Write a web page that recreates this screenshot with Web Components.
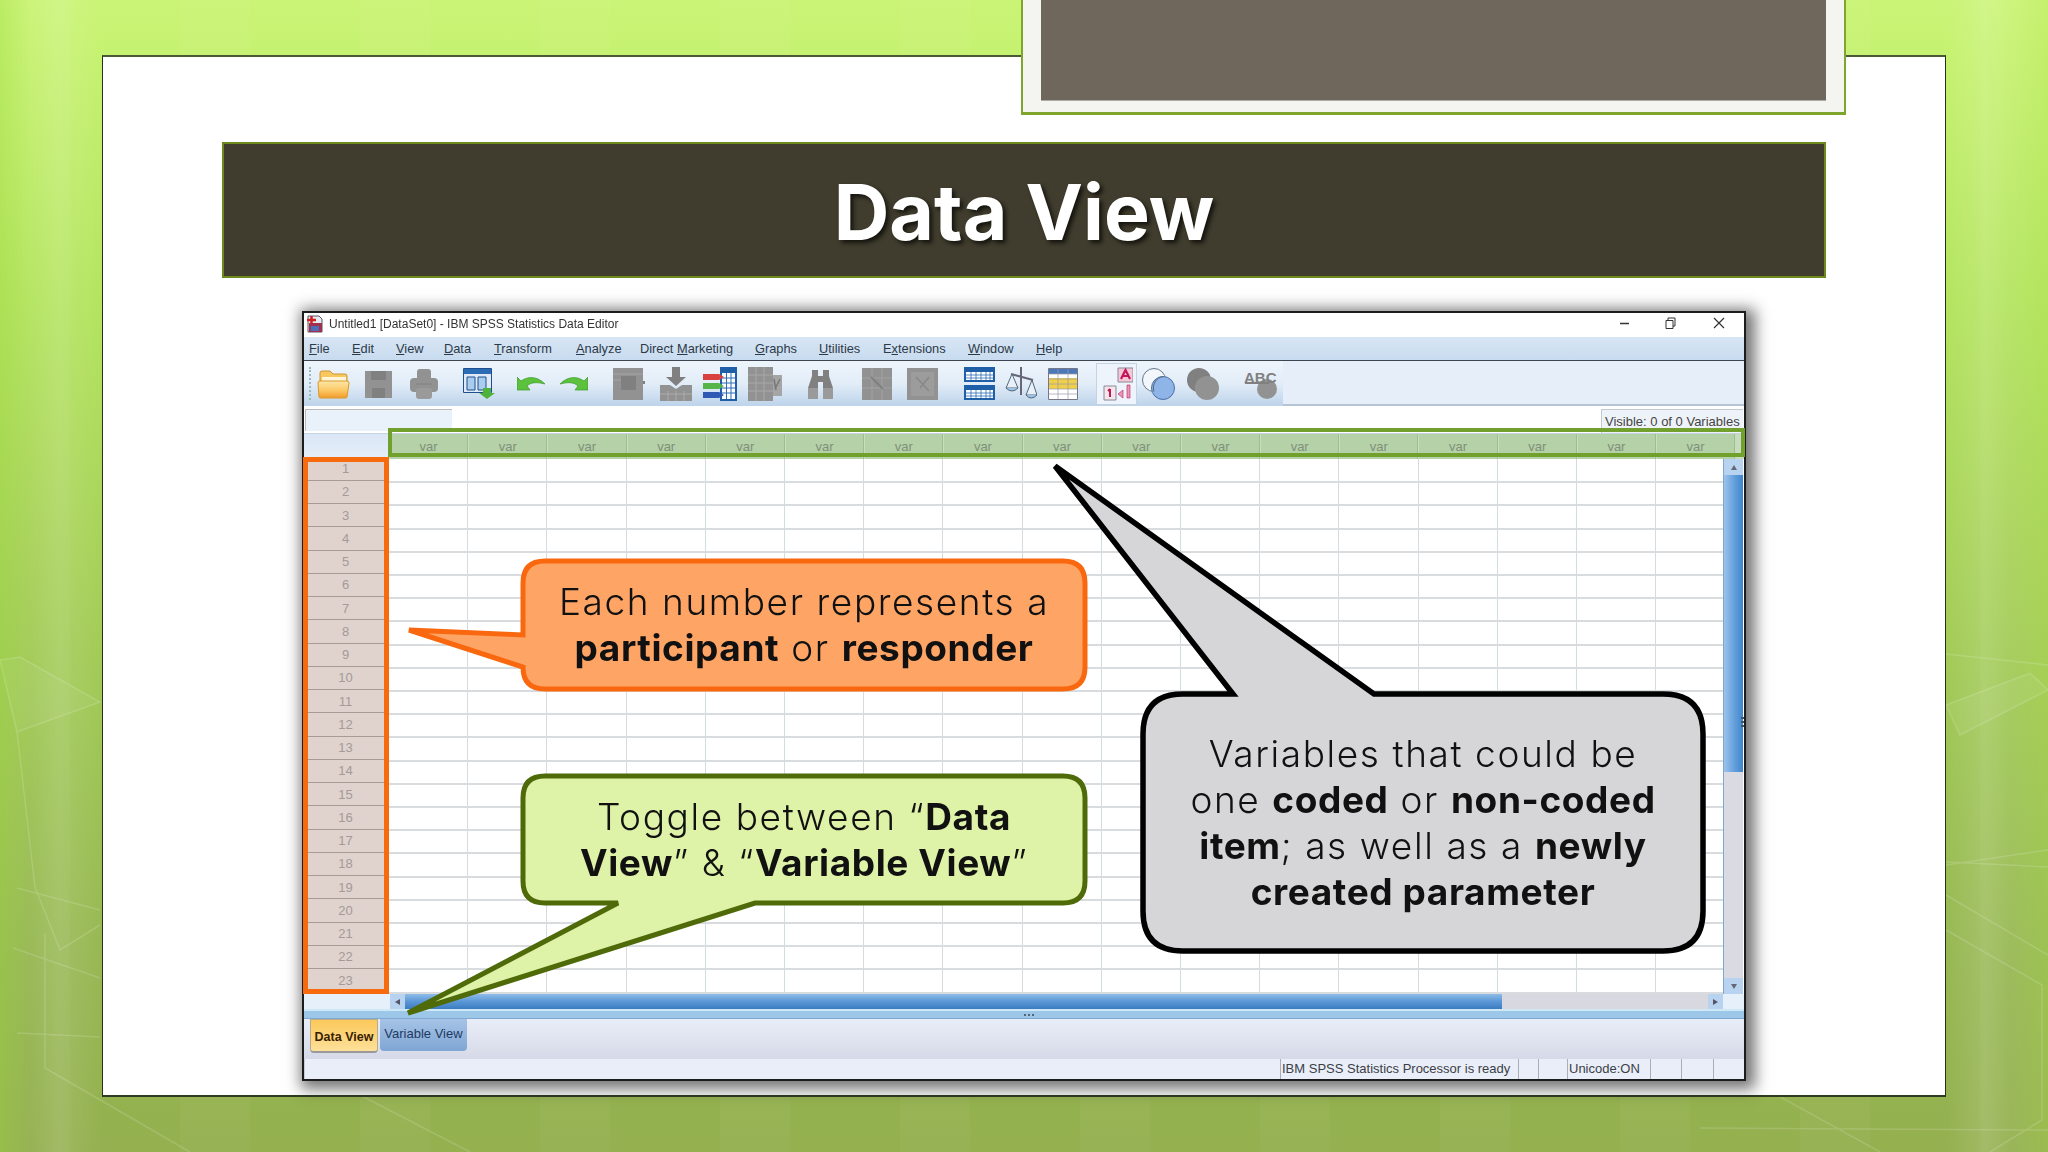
<!DOCTYPE html>
<html>
<head>
<meta charset="utf-8">
<title>Data View</title>
<style>
html,body{margin:0;padding:0;background:#a5cb5c}
</style>
</head>
<body>
<slide-stage>
  <photo-frame slot="over"></photo-frame>
  <title-bar>Data View</title-bar>
  <spss-window></spss-window>
  <call-out slot="over" kind="orange" style="left:523px;top:561px;width:562px;height:128px">Each number represents a<br><b>participant</b> or <b>responder</b></call-out>
  <call-out slot="over" kind="green" style="left:523px;top:776px;width:562px;height:127px">Toggle between “<b>Data</b><br><b>View</b>” &amp; “<b>Variable View</b>”</call-out>
  <call-out slot="over" kind="gray" style="left:1143px;top:694px;width:560px;height:257px">Variables that could be<br>one <b>coded</b> or <b>non-coded</b><br><b>item</b>; as well as a <b>newly</b><br><b>created parameter</b></call-out>
</slide-stage>

<script>
// the slide: green background, white panel, anything floating goes in slot "over"
const stageTpl = document.createElement('template');
stageTpl.innerHTML = `
<style>
:host{display:block;position:relative;width:2048px;height:1152px;overflow:hidden;
  background:
    linear-gradient(90deg,rgba(150,215,50,.3) 0,rgba(150,215,50,0) 30px,rgba(255,255,255,.1) 60px,rgba(255,255,255,0) 102px,rgba(255,255,255,0) 1946px,rgba(255,255,255,.12) 1985px,rgba(255,255,255,.03) 2010px,rgba(170,225,60,.2) 2048px),
    repeating-linear-gradient(90deg,rgba(255,255,255,.03) 0,rgba(255,255,255,.03) 70px,rgba(255,255,255,0) 70px,rgba(255,255,255,0) 180px),
    linear-gradient(180deg,#caf476 0,#c6f271 50px,#b4e45f 300px,#a2cb57 650px,#97b853 950px,#94b04f 1152px);}
svg{position:absolute;left:0;top:0}
.panel{position:absolute;left:102px;top:55px;width:1842px;height:1038px;box-sizing:content-box;background:#fff;
  border:1px solid #26301c;border-top:2px solid #4a5a34;border-bottom:2px solid #2e3a22;display:flex;flex-direction:column;padding:0}
.inner{display:flex;flex-direction:column;padding-top:85px}
</style>
<svg width="2048" height="1152" fill="none" stroke="#fff" stroke-opacity=".15" stroke-width="1.5">
  <path d="M0 660L20 657L100 702L17 732Z" fill="#fff" fill-opacity=".05"/>
  <path d="M17 732L35 887L60 950L100 925M17 888L100 910M13 948L100 978M45 933V1068L190 1152M17 1033L100 1037"/>
  <path d="M1946 654L2048 665M1946 865L2048 850M1946 862L2048 867M1946 895L2048 955M1946 930L2042 985V1120L1990 1152M1777 1095L1880 1152M1700 1128L2048 1130M360 1095L470 1152"/>
  <path d="M1946 705L2030 673L2048 690L1960 735Z" fill="#fff" fill-opacity=".06"/>
</svg>
<div class="panel"><div class="inner"><slot></slot></div></div>
<slot name="over"></slot>`;
class SlideStage extends HTMLElement {
  constructor() {
    super();
    this.attachShadow({ mode: 'open' }).appendChild(stageTpl.content.cloneNode(true));
  }
}
customElements.define('slide-stage', SlideStage);

class PhotoFrame extends HTMLElement {
  constructor() {
    super();
    this.attachShadow({ mode: 'open' }).innerHTML = `
<style>
:host{display:block;position:absolute;left:1021px;top:-4px;width:825px;height:119px;box-sizing:border-box;
  background:#f4f5f1;border:2px solid #7fa52f;border-bottom-width:3px;padding:0 18px 12px}
div{height:100%;background:#6f675b;border-bottom:1px solid #aaa}
</style><div></div>`;
  }
}
customElements.define('photo-frame', PhotoFrame);

class TitleBar extends HTMLElement {
  constructor() {
    super();
    this.attachShadow({ mode: 'open' }).innerHTML = `
<style>
:host{display:flex;align-items:center;justify-content:center;box-sizing:border-box;
  width:1604px;height:136px;margin-left:119px;padding-top:4px;background:#403d2e;border:2px solid #6c8a1c;
  color:#fff;font:700 77px/1 Inter,"Liberation Sans",sans-serif;text-shadow:3px 3px 4px #15140e}
</style><slot></slot>`;
  }
}
customElements.define('title-bar', TitleBar);

// speech bubbles, the tail is part of the svg path and sticks out of the box
const bubbles = {
  orange: { fill: '#fea465', stroke: '#f9680f', sw: 5,
    d: 'M22 0H540Q562 0 562 22V106Q562 128 540 128H22Q0 128 0 106L-114 69L0 74V22Q0 0 22 0Z' },
  green: { fill: '#dff3a8', stroke: '#4f6a08', sw: 5,
    d: 'M22 0H540Q562 0 562 22V105Q562 127 540 127H232L-115 237L95 127H22Q0 127 0 105V22Q0 0 22 0Z' },
  gray: { fill: '#d6d6d8', stroke: '#000', sw: 5.5,
    d: 'M40 0H90L-88 -228L231 0H520Q560 0 560 40V217Q560 257 520 257H40Q0 257 0 217V40Q0 0 40 0Z' }
};

class CallOut extends HTMLElement {
  connectedCallback() {
    if (this.shadowRoot) return;
    const b = bubbles[this.getAttribute('kind')];
    const w = parseFloat(this.style.width), h = parseFloat(this.style.height);
    this.attachShadow({ mode: 'open' }).innerHTML = `
<style>
:host{display:flex;position:absolute;align-items:center;justify-content:center;text-align:center;
  color:#111;font:300 37px/46px Inter,"Liberation Sans",sans-serif;letter-spacing:1.6px}
svg{position:absolute;left:0;top:0;overflow:visible}
span{position:relative}
::slotted(b){font-weight:700;letter-spacing:.6px}
</style>
<svg width="${w}" height="${h}"><path d="${b.d}" fill="${b.fill}" stroke="${b.stroke}" stroke-width="${b.sw}" stroke-linejoin="miter" stroke-miterlimit="3"/></svg>
<span><slot></slot></span>`;
  }
}
customElements.define('call-out', CallOut);

// toolbar icons, gray ones are the disabled buttons
const GR = '#929292', GD = '#808080';
const icons = [
  [317, 33, 30, `<defs><linearGradient id="fo" x1="0" y1="0" x2="0" y2="1"><stop offset="0" stop-color="#fde6a8"/><stop offset=".55" stop-color="#fbc964"/><stop offset="1" stop-color="#f39a2a"/></linearGradient></defs><path d="M3 4q0-2 2-2h8l3 3h12q2 0 2 2v19H3z" fill="#f8c860" stroke="#cf9430"/><path d="M5 8h24v6H5z" fill="#fff6dc"/><path d="M1 14q0-2 2-2h27q2 0 2 2l-2 14q0 1-2 1H4q-2 0-2-1z" fill="url(#fo)" stroke="#d99a2a"/>`],
  [365, 27, 28, `<path d="M0 1h27v27H0z" fill="${GR}"/><path d="M6 1h15v9H6zM7 18h13v10H7z" fill="${GD}"/>`],
  [410, 28, 32, `<rect x="7" y="1" width="14" height="12" rx="3" fill="${GR}"/><rect x="0" y="10" width="28" height="14" rx="4" fill="${GR}"/><rect x="6" y="20" width="16" height="11" rx="3" fill="#9a9a9a"/><path d="M6 16h16" stroke="${GD}"/>`],
  [463, 32, 31, `<path d="M.5 .5h28v24H.5z" fill="#dfeaf6" stroke="#1f4f8f"/><path d="M1 1h27v5H1z" fill="#2b6cb5"/><path d="M4 9h8v13H4zM15 9h8v13h-8z" fill="#a9cdee" stroke="#1f4f8f"/><path d="M20 20h8v5h4l-8 6-8-6h4z" fill="#4eb33a"/>`],
  [517, 28, 15, `<path d="M0 14V1l4 4C11 0 20 0 28 8 20 6 14 6 10 10l3 4z" fill="#5cc23e" stroke="#3a9a2a" stroke-width=".7"/>`],
  [560, 28, 15, `<path d="M28 14V1l-4 4C17 0 8 0 0 8c8-2 14-2 18 2l-3 4z" fill="#5cc23e" stroke="#3a9a2a" stroke-width=".7"/>`],
  [613, 32, 32, `<path d="M0 0h30v32H0z" fill="${GR}"/><path d="M8 8h15v14H8zM30 13h2v3h-2z" fill="${GD}"/><path d="M0 6h30M0 12h8" stroke="#a5a5a5"/>`],
  [660, 32, 34, `<path d="M12 0h8v10h6l-10 9L6 10h6z" fill="${GD}"/><path d="M0 18h10l6 4 6-4h10v16H0z" fill="${GR}"/><path d="M0 27h32M8 24v10M16 24v10M24 24v10" stroke="#aaa"/>`],
  [703, 34, 34, `<path d="M17 0h17v34H17z" fill="#1f5fa8"/><path d="M19 6h13v26H19z" fill="#fff"/><path d="M19 11h13M19 16h13M19 21h13M19 26h13M23.500 6v26M28 6v26" stroke="#2b6cb5"/><path d="M0 7h16l5 3-5 3H0z" fill="#d94040"/><path d="M0 16h16l5 3-5 3H0z" fill="#56b548"/><path d="M0 25h16l5 3-5 3H0z" fill="#3058b5"/>`],
  [748, 34, 34, `<path d="M0 0h25v34H0z" fill="${GR}"/><path d="M25 8h9v21h-9z" fill="#a5a5a5"/><path d="M0 8h25M0 16h25M0 24h25M8 0v34M16 0v34" stroke="#a8a8a8"/><path d="M26 12l2 11M32 12l-5 10" stroke="#777" stroke-width="1.5"/>`],
  [808, 25, 31, `<path d="M4 2h6v6h5V2h6v6l4 12v11H15V14h-5v17H0V20L4 8z" fill="${GD}"/><path d="M0 20h10v11H0zM15 20h10v11H15z" fill="#9a9a9a"/>`],
  [862, 30, 32, `<path d="M0 0h30v32H0z" fill="${GR}"/><path d="M0 10h30M0 20h30M10 0v32M20 0v32" stroke="#a2a2a2"/><path d="M9 9l12 12" stroke="${GD}" stroke-width="2"/>`],
  [907, 31, 32, `<path d="M0 0h31v32H0z" fill="${GR}"/><path d="M4 4h23v24H4z" fill="#9c9c9c"/><path d="M9 9l13 14M22 9L13 20" stroke="#888" stroke-width="1.500"/>`],
  [964, 31, 33, `<path d="M0 0h31v15H0z" fill="#1f5fa8"/><path d="M2 5h27v8H2z" fill="#fff"/><path d="M2 8h27M2 11h27M7 5v8M12 5v8M17 5v8M22 5v8M26 5v8" stroke="#2b6cb5" stroke-width=".8"/><path d="M0 18h31v15H0z" fill="#1f5fa8"/><path d="M2 23h27v8H2z" fill="#fff"/><path d="M2 26h27M2 29h27M7 23v8M12 23v8M17 23v8M22 23v8M26 23v8" stroke="#2b6cb5" stroke-width=".8"/>`],
  [1005, 32, 33, `<path d="M16 0v7M6 7L28 13M16 28V7" stroke="#667" stroke-width="2"/><path d="M7 7L1 21h12zM27 13l-6 15h11z" fill="#e8f1fa" stroke="#567"/><path d="M1 21q6 6 12 0M21 28q5 6 11 0" fill="#9cc4ea" stroke="#567"/>`],
  [1048, 30, 32, `<path d="M.5 .5h29v31H.5z" fill="#fff" stroke="#778"/><path d="M1 1h28v5H1z" fill="#4a78b8"/><path d="M1 10h28v11H1z" fill="#f0cf4a"/><path d="M1 6h28M1 11h28M1 16h28M1 21h28M1 26h28M10 1v30M20 1v30" stroke="#99a" stroke-width=".7"/>`],
];
const selected = `<path d="M17 2h15v14H17z" fill="#f6c8d6" stroke="#889"/><path d="M20 13l4.500-9 4.500 9M22 10h5" fill="none" stroke="#c2185b" stroke-width="2.200"/>
  <path d="M3 20h12v14H3z" fill="#f6e6ea" stroke="#889"/><path d="M9 23v8M7 25l2-2" stroke="#c2185b" stroke-width="2" fill="none"/><path d="M17 28l5-4v8zM26 19v13h3V19z" fill="#e79ab5" stroke="#c2185b" stroke-width=".6"/>`;
const iconsB = [
  [1142, 33, 32, `<circle cx="12" cy="12" r="11.500" fill="#f3f7fc" stroke="#678"/><circle cx="21" cy="20" r="11.500" fill="#8fb4e8" stroke="#4a6fa8"/><path d="M12 23.500a11.500 11.500 0 0 1 9-15" fill="none" stroke="#567"/>`],
  [1187, 32, 32, `<circle cx="12" cy="12" r="12" fill="${GD}"/><circle cx="20" cy="20" r="12" fill="${GR}"/>`],
  [1245, 32, 32, `<circle cx="22" cy="21" r="10" fill="${GR}"/><path d="M0 15h24" stroke="${GD}" stroke-width="2"/>`],
];

class SpssToolbar extends HTMLElement {
  constructor() {
    super();
    let x = 317, html = '';
    for (const [left, w, h, body] of icons) {
      html += `<svg style="margin-left:${left - x}px" width="${w}" height="${h}" viewBox="0 0 ${w} ${h}">${body}</svg>`;
      x = left + w;
    }
    html += `<span class="sel"><svg width="32" height="36" viewBox="0 0 32 36">${selected}</svg></span>`;
    x = 1137;
    for (const [left, w, h, body] of iconsB) {
      html += `<svg style="margin-left:${left - x}px" width="${w}" height="${h}" viewBox="0 0 ${w} ${h}">${body}</svg>`;
      x = left + w;
    }
    this.attachShadow({ mode: 'open' }).innerHTML = `
<style>
:host{display:flex;height:45px;background:#e6eff9;box-shadow:inset 0 -2px 0 #b5c3d2}
.bar{display:flex;align-items:center;width:979px;padding-left:13px;box-sizing:border-box;
  background:linear-gradient(180deg,#eef5fc,#e2edf8 50%,#bdd3ea);position:relative}
.bar:before{content:"";position:absolute;left:5px;top:6px;bottom:6px;border-left:2px dotted #9bb}
svg{flex:none}
.abc{position:absolute;left:940px;top:8px;font:700 15px "Liberation Sans",sans-serif;color:${GD}}
.sel{display:flex;align-items:center;justify-content:center;box-sizing:border-box;width:41px;height:42px;margin-left:${1096 - (1078)}px;background:#eef4fb;border:1px solid #c5d2e0;flex:none}
</style>
<div class="bar">${html}<span class="abc">ABC</span></div>`;
  }
}
customElements.define('spss-toolbar', SpssToolbar);

// first letter underlined like a windows menu
class SpssMenubar extends HTMLElement {
  constructor() {
    super();
    const items = [['F','ile',43],['E','dit',44],['V','iew',48],['D','ata',50],['T','ransform',82],['A','nalyze',64],['Direct |M','arketing',115],['G','raphs',64],['U','tilities',64],['E|x','tensions',85],['W','indow',68],['H','elp',40]];
    const html = items.map(([a, b, w]) => {
      const p = a.split('|');
      const lead = p.length > 1 ? p[0] + '<u>' + p[1] + '</u>' : '<u>' + a + '</u>';
      return `<span style="width:${w}px">${lead}${b}</span>`;
    }).join('');
    this.attachShadow({ mode: 'open' }).innerHTML = `
<style>
:host{display:flex;align-items:center;height:24px;box-sizing:border-box;padding-left:5px;
  background:linear-gradient(180deg,#d8e6f4,#c8dbef);border-bottom:1px solid #3d4650;
  font:12.8px "Liberation Sans",sans-serif;color:#2c3a48}
span{flex:none;white-space:pre}
</style>${html}`;
  }
}
customElements.define('spss-menubar', SpssMenubar);

class SpssGrid extends HTMLElement {
  constructor() {
    super();
    let heads = '', rows = '';
    for (let i = 0; i < 17; i++) heads += '<div class="h">var</div>';
    for (let i = 1; i <= 23; i++) rows += `<div class="r">${i}</div>`;
    this.attachShadow({ mode: 'open' }).innerHTML = `
<style>
:host{display:flex;flex-direction:column;flex:1;min-height:0;font:13px "Liberation Sans",sans-serif}
.top{display:flex;height:25px;flex:none;overflow:hidden}
.corner{width:85px;flex:none;background:linear-gradient(180deg,#dbe7f6,#e5eefa)}
.heads{display:flex;flex:1;overflow:hidden;background:#c6dcbc}
.h{flex:none;width:79.2px;box-sizing:border-box;display:flex;align-items:center;justify-content:center;
  background:#b5d1a8;color:#7f9079;border-right:1px solid #9dbf90;border-left:1px solid #c8dec0}
.body{display:flex;flex:1;min-height:0}
.rows{width:83px;flex:none;display:flex;flex-direction:column;margin-top:-1.500px;padding-right:2px;background:#e0d1cb}
.r{height:23.25px;box-sizing:border-box;flex:none;display:flex;align-items:center;justify-content:center;
  background:#e0d2cc;color:#a39b98;border-bottom:1px solid #a89a94;font-size:13px}
.cells{flex:1;background-color:#fff;
  background-image:repeating-linear-gradient(180deg,transparent 0,transparent 21.2px,#d8dcdf 21.2px,#d8dcdf 23.2px),
    repeating-linear-gradient(90deg,transparent 0,transparent 78.2px,#d3dce1 78.2px,#d3dce1 79.2px);
  background-position:0 1px,0 0}
.v{width:19px;flex:none;display:flex;flex-direction:column;background:#d9dae2;border-left:1px solid #7fa8cc;box-sizing:content-box;margin-right:1px}
.thumb{height:297px;flex:none;background:linear-gradient(90deg,#9cc3ec,#5f9cda 60%,#3f85cc)}
.arrow{height:16px;flex:none;background:#b8d3ef;display:flex;align-items:center;justify-content:center}
.track{flex:1}
.hs{display:flex;height:15px;flex:none}
.hs .pad{width:86px;flex:none;background:#e6f0fa}
.hs .arrow{width:15px;height:auto;flex:none}
.hbar{flex:1;display:flex;background:#d8d9e0}
.hthumb{width:1097px;background:linear-gradient(180deg,#8ebce8,#5b97d6 50%,#3a7cc0)}
.hs .end{width:21px;flex:none;background:#e6f0fa}
svg{display:block}
</style>
<div class="top"><div class="corner"></div><div class="heads">${heads}</div></div>
<div class="body">
  <div class="rows">${rows}</div>
  <div class="cells"></div>
  <div class="v">
    <div class="arrow"><svg width="8" height="7"><path d="M4 1l3 5H1z" fill="#667"/></svg></div>
    <div class="thumb"></div><div class="track"></div>
    <div class="arrow"><svg width="8" height="7"><path d="M4 6l3-5H1z" fill="#667"/></svg></div>
  </div>
</div>
<div class="hs">
  <div class="pad"></div>
  <div class="arrow"><svg width="7" height="8"><path d="M1 4l5-3v6z" fill="#556"/></svg></div>
  <div class="hbar"><div class="hthumb"></div></div>
  <div class="arrow"><svg width="7" height="8"><path d="M6 4L1 1v6z" fill="#556"/></svg></div>
  <div class="end"></div>
</div>`;
  }
}
customElements.define('spss-grid', SpssGrid);

class SpssTabs extends HTMLElement {
  constructor() {
    super();
    this.attachShadow({ mode: 'open' }).innerHTML = `
<style>
:host{display:flex;height:40px;flex:none;box-sizing:border-box;padding:0 0 0 6px;gap:2px;
  background:linear-gradient(180deg,#e8eef8,#d6dae8);font:13px "Liberation Sans",sans-serif}
div{box-sizing:border-box;display:flex;align-items:center;justify-content:center;border-radius:0 0 4px 4px}
.on{width:68px;height:34px;background:linear-gradient(180deg,#fcc95a,#fde09a);border:1px solid #b9ac8c;border-bottom:2px solid #999;color:#3a1e00;font-weight:700;font-size:12.5px;padding-top:3px;white-space:nowrap}
.off{width:87px;height:32px;background:linear-gradient(180deg,#a6c3e6,#7fa6d4);color:#1f3a62;padding-bottom:4px;white-space:nowrap}
</style><div class="on">Data View</div><div class="off">Variable View</div>`;
  }
}
customElements.define('spss-tabs', SpssTabs);

class SpssStatus extends HTMLElement {
  constructor() {
    super();
    this.attachShadow({ mode: 'open' }).innerHTML = `
<style>
:host{display:flex;height:20px;flex:none;background:#e9eef9;font:13px/20px "Liberation Sans",sans-serif;color:#3c4046}
div{box-sizing:border-box;flex:none;border-left:1px solid #a9aeb8;padding-left:1px;white-space:nowrap}
</style>
<div style="width:976px;border-left:1px solid #c5ccd8"></div><div style="width:238px">IBM SPSS Statistics Processor is ready</div><div style="width:20px"></div><div style="width:29px"></div><div style="width:83px">Unicode:ON</div><div style="width:31px"></div><div style="width:32px"></div><div style="width:31px"></div>`;
  }
}
customElements.define('spss-status', SpssStatus);

class SpssWindow extends HTMLElement {
  constructor() {
    super();
    this.attachShadow({ mode: 'open' }).innerHTML = `
<style>
:host{display:flex;flex-direction:column;position:relative;box-sizing:border-box;width:1444px;height:770px;margin:33px 0 0 199px;
  background:#fff;border:2px solid #1a1c1e;box-shadow:4px 3px 14px 5px rgba(40,40,40,.65);
  font-family:"Liberation Sans",sans-serif;filter:blur(.4px)}
.title{display:flex;align-items:center;height:24px;flex:none;box-sizing:border-box;padding-bottom:2px;font-size:12px;color:#333}
.title svg.app{margin:0 5px 0 2px}
.title .txt{flex:1}
.title .ctl{margin-right:15px;margin-top:-3px}
.formula{display:flex;height:28px;flex:none;background:#fff;box-sizing:border-box;border-bottom:1px solid #c5d2e0;font-size:13px;color:#444}
.formula .a{width:146px;margin:3px 5px 2px 1px;background:#e9f1fb;border-top:1px solid #bbb;border-left:1px solid #bbb}
.formula .b{flex:1;background:#fff}
.formula .c{width:142px;background:#eef3f9;border-left:1px solid #c3c9d0;border-top:1px solid #c3c9d0;margin-top:3px;padding-left:3px;box-sizing:border-box;line-height:24px;margin-right:1px;white-space:nowrap}
.split{height:10px;flex:none;box-sizing:border-box;background:#9cc7e8;border-top:2px solid #cfe8f5;border-bottom:1px solid #7fa9d0;position:relative}
.split:after{content:"";position:absolute;left:50%;top:3px;width:12px;height:2px;background:repeating-linear-gradient(90deg,#567 0,#567 2px,transparent 2px,transparent 4px)}
.grip{position:absolute;right:0;top:404px;width:3px;height:12px;background:repeating-linear-gradient(180deg,#456 0,#456 2px,transparent 2px,transparent 4px)}
.hl{position:absolute;box-sizing:border-box;pointer-events:none}
.orange{left:-1px;top:144px;width:86px;height:537px;border:5px solid #f76a0d}
.lime{left:84px;top:115px;width:1357px;height:29px;border:4px solid #72a02d}
</style>
<div class="title">
  <svg class="app" width="18" height="18" viewBox="0 0 18 18"><path d="M2 1h11l3 3v13H2z" fill="#e8eaf2" stroke="#556"/><path d="M3 8h13v9H3z" fill="#a03050"/><path d="M1 5h9M5.500 1v8" stroke="#c22" stroke-width="2.500"/><path d="M5 11h8v5H5z" fill="#4a6fb8"/></svg>
  <span class="txt">Untitled1 [DataSet0] - IBM SPSS Statistics Data Editor</span>
  <svg class="ctl" width="110" height="14" viewBox="0 0 110 14" fill="none" stroke="#333"><path d="M1 7.500h9" stroke-width="1.500"/><path d="M47 4.500h7v8h-7zM49 4.500v-2.500h7v8h-2"/><path d="M95 2l10 10M105 2L95 12" stroke-width="1.200"/></svg>
</div>
<spss-menubar></spss-menubar>
<spss-toolbar></spss-toolbar>
<div class="formula"><div class="a"></div><div class="b"></div><div class="c">Visible: 0 of 0 Variables</div></div>
<spss-grid></spss-grid>
<div class="split"></div>
<spss-tabs></spss-tabs>
<spss-status></spss-status>
<div class="grip"></div>
<div class="hl lime"></div>
<div class="hl orange"></div>`;
  }
}
customElements.define('spss-window', SpssWindow);
</script>
</body>
</html>
